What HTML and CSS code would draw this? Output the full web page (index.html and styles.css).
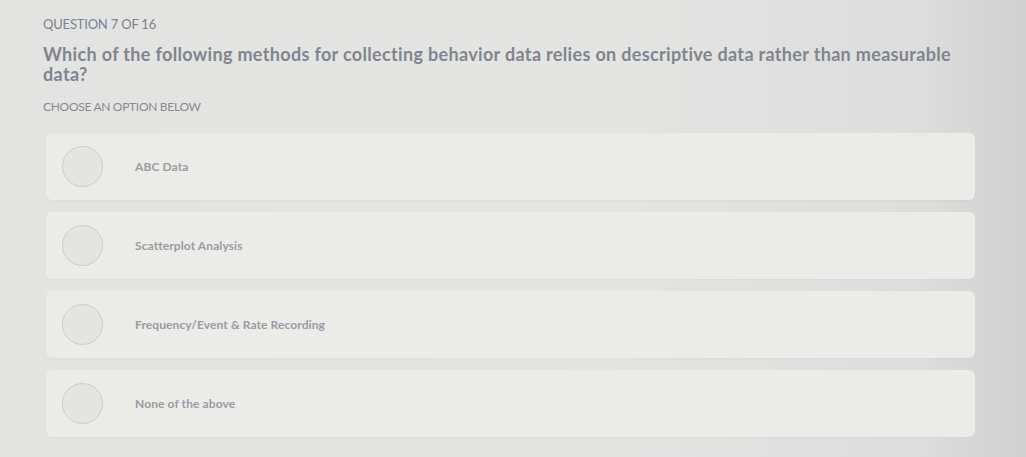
FILE: index.html
```html
<!DOCTYPE html>
<html>
<head>
<meta charset="utf-8">
<link rel="stylesheet" href="styles.css">
</head>
<body>
<main class="quiz">
  <div class="counter">QUESTION 7 OF 16</div>
  <h1 class="question">Which of the following methods for collecting behavior data relies on descriptive data rather than measurable data?</h1>
  <div class="prompt">CHOOSE AN OPTION BELOW</div>
  <div class="options">
    <div class="option"><span class="radio"></span><span class="label">ABC Data</span></div>
    <div class="option"><span class="radio"></span><span class="label">Scatterplot Analysis</span></div>
    <div class="option"><span class="radio"></span><span class="label">Frequency/Event &amp; Rate Recording</span></div>
    <div class="option"><span class="radio"></span><span class="label">None of the above</span></div>
  </div>
</main>
</body>
</html>
```
FILE: styles.css
```css
html, body {
  margin: 0;
  height: 100%;
}
body {
  background: linear-gradient(90deg, #e3e4e2 0%, #e4e5e3 60%, #dcdddc 90%, #cfd0cf 100%);
  font-family: Lato, "Noto Sans", sans-serif;
  overflow: hidden;
}
.quiz {
  padding: 17px 40px 0 43px;
}
.counter {
  font-size: 13px;
  color: #7b8190;
  letter-spacing: -0.2px;
  line-height: 14px;
}
.question {
  margin: 13px 0 0 0;
  font-size: 18px;
  font-weight: 700;
  line-height: 20px;
  color: #80858f;
  max-width: 935px;
  letter-spacing: 0.33px;
}
.prompt {
  margin-top: 16px;
  font-size: 12px;
  color: #868a90;
  letter-spacing: -0.3px;
  line-height: 13px;
}
.options {
  margin-top: 20px;
  margin-left: 3px;
  width: 929px;
  display: flex;
  flex-direction: column;
  gap: 12px;
}
.option {
  height: 67px;
  background: #ebebe8;
  border-radius: 6px;
  display: flex;
  align-items: center;
  padding-left: 16px;
  box-shadow: 0 1px 2px rgba(0,0,0,0.03);
}
.radio {
  width: 39px;
  height: 39px;
  border-radius: 50%;
  border: 1.5px solid #c9cdca;
  background: #e4e5e1;
  flex: none;
}
.label {
  margin-left: 32px;
  font-size: 12px;
  font-weight: 700;
  color: #989ca3;
  letter-spacing: 0.1px;
}
```
